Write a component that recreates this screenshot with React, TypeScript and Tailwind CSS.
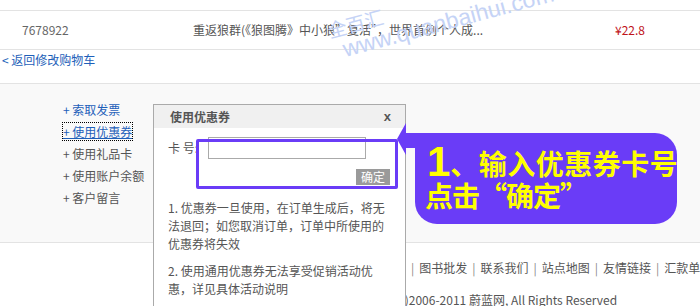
import React from "react";

const cjk = "font-['Noto_Sans_CJK_SC','Liberation_Sans',sans-serif]";

export default function App() {
  const footerLinks = ["诚聘英才", "图书批发", "联系我们", "站点地图", "友情链接", "汇款单查询"];
  return (
    <div className={`relative w-[700px] h-[306px] overflow-hidden bg-white text-[12px] text-[#555] ${cjk}`}>
      {/* top spacer */}
      <div className="h-[11px] border-b border-[#e3e3e3]" />
      {/* order row */}
      <div className="h-[39px] border-b border-[#e3e3e3] flex items-center leading-[18px]">
        <div className="pl-[22px] w-[193px] text-[#666]">7678922</div>
        <div className="w-[422px] whitespace-nowrap">重返狼群(《狼图腾》中小狼”复活”，世界首例个人成...</div>
        <div className="text-[#c0141c]">¥22.8</div>
      </div>
      {/* back link */}
      <div className="h-[34px] border-b border-[#e3e3e3] pt-[1px] pl-[2px] leading-[18px] text-[#1e5fb9]">
        &lt; 返回修改购物车
      </div>
      {/* gray section */}
      <div className="h-[159px] bg-[#f9f9f9] border-b border-[#e3e3e3] pl-[63px] pt-[15px]">
        <ul className="flex flex-col leading-[22px]">
          <li className="text-[#1e5fb9]">+ 索取发票</li>
          <li className="text-[#1e5fb9]">
            <span className="underline outline outline-1 outline-dotted outline-black">+ 使用优惠券</span>
          </li>
          <li>+ 使用礼品卡</li>
          <li>+ 使用账户余额</li>
          <li>+ 客户留言</li>
        </ul>
      </div>
      {/* footer */}
      <div className="pt-[16px] pl-[358px] whitespace-nowrap leading-[18px]">
        <div className="flex gap-[5px]">
          {footerLinks.map((t, i) => (
            <React.Fragment key={t}>
              {i > 0 && <span className="text-[#888]">|</span>}
              <span>{t}</span>
            </React.Fragment>
          ))}
        </div>
      </div>
      <div className="pt-[14px] pl-[393px] whitespace-nowrap leading-[18px]">
        (C)2006-2011 蔚蓝网, All Rights Reserved
      </div>

      {/* watermark */}
      <div className="absolute left-[325px] top-[20px] origin-top-left -rotate-[15deg] text-[#c5d3f6] leading-[22px] pointer-events-none whitespace-nowrap">
        <div className="text-[19px]">全百汇</div>
        <div className="pl-[10px] text-[23px] font-['Liberation_Sans',sans-serif]">www.quanbaihui.com</div>
      </div>

      {/* dialog */}
      <div className="absolute left-[153px] top-[104px] w-[253px] h-[220px] border border-[#aaa] bg-white">
        <div className="h-[23px] bg-[#f0f0f0] flex items-center justify-between pl-[16px] pr-[14px]">
          <span className="font-bold text-[12px]">使用优惠券</span>
          <span className="font-bold font-['Liberation_Sans',sans-serif] text-[13px]">x</span>
        </div>
        <div className="pl-[14px] pt-[9px]">
          <div className="flex items-center h-[22px]">
            <span className="w-[40px]">卡 号:</span>
            <div className="w-[158px] h-[22px] border border-[#aaa] bg-white" />
          </div>
          <div className="flex justify-end pr-[15px] mt-[10px]">
            <div className="w-[34px] h-[16px] bg-[#9a9a9a] text-white text-[12px] leading-[16px] text-center">确定</div>
          </div>
          <div className="mt-[14px] leading-[18px] text-[12px]">
            <p>1. 优惠券一旦使用，在订单生成后，将无<br />法退回；如您取消订单，订单中所使用的<br />优惠券将失效</p>
            <p className="mt-[9px]">2. 使用通用优惠券无法享受促销活动优<br />惠，详见具体活动说明</p>
          </div>
        </div>
      </div>

      {/* purple highlight box */}
      <div className="absolute left-[196px] top-[139px] w-[202px] h-[50px] border-[3px] border-[#6a3cf7] rounded-[2px]" />

      {/* arrow */}
      <svg className="absolute left-0 top-0" width="700" height="306" viewBox="0 0 700 306">
        <polygon points="397,139 406,123 406,133 440,133 440,170 415,170 415,148 406,148 406,155" fill="#6a3cf7" />
      </svg>

      {/* callout */}
      <div className="absolute left-[415px] top-[133px] w-[262px] h-[91px] bg-[#6a3cf7] rounded-[22px] rounded-tl-none pl-[12px] pt-[12px] text-[#ffff00] font-bold leading-[32px] whitespace-nowrap">
        <div className="flex items-end">
          <span className="text-[42px] leading-[34px] font-['Liberation_Sans',sans-serif]">1</span>
          <span className="text-[28px] tracking-[0.5px]">、输入优惠券卡号</span>
        </div>
        <div className="text-[28px] -ml-[2px] tracking-[-1px]">点击“确定”</div>
      </div>
    </div>
  );
}
